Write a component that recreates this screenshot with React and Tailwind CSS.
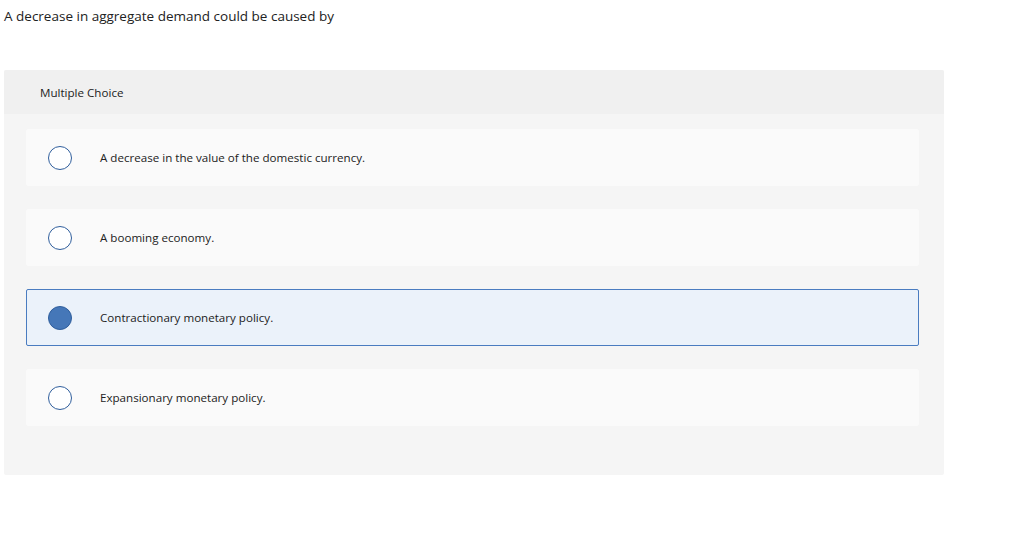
import React, { useState } from 'react';

const options = [
  'A decrease in the value of the domestic currency.',
  'A booming economy.',
  'Contractionary monetary policy.',
  'Expansionary monetary policy.',
];

function App() {
  const [selected, setSelected] = useState(2);

  return (
    <div className="min-h-screen bg-white" style={{ fontFamily: '"Open Sans", Lato, sans-serif' }}>
      <div className="px-[4px] pt-[7px]">
        <p className="text-[13.5px] leading-[18px] text-[#222]">A decrease in aggregate demand could be caused by</p>
      </div>
      <div className="ml-[4px] mt-[45px] w-[940px] h-[405px] rounded-[2px] bg-[#f5f5f5]">
        <div className="h-[44px] flex items-center px-[36px] pt-[1px] bg-[#f0f0f0] rounded-t-[2px]">
          <span className="text-[11.6px] text-[#222]">Multiple Choice</span>
        </div>
        <div className="flex flex-col gap-[23px] pt-[15px] px-[22px]">
          {options.map((text, i) => {
            const isSel = i === selected;
            return (
              <button
                key={i}
                onClick={() => setSelected(i)}
                className={
                  'w-[893px] h-[57px] flex items-center rounded-[2px] text-left ' +
                  (isSel ? 'bg-[#ebf2fa] border border-[#4a7cc0]' : 'bg-[#fafafa] border border-[#fafafa]')
                }
              >
                <span
                  className={
                    'ml-[21px] w-[24px] h-[24px] rounded-full border ' +
                    (isSel ? 'bg-[#4577b8] border-[#2f5e9c]' : 'bg-white border-[#2f5e9c]')
                  }
                />
                <span className="ml-[28px] text-[11.6px] text-[#222]">{text}</span>
              </button>
            );
          })}
        </div>
      </div>
    </div>
  );
}

export default App;
